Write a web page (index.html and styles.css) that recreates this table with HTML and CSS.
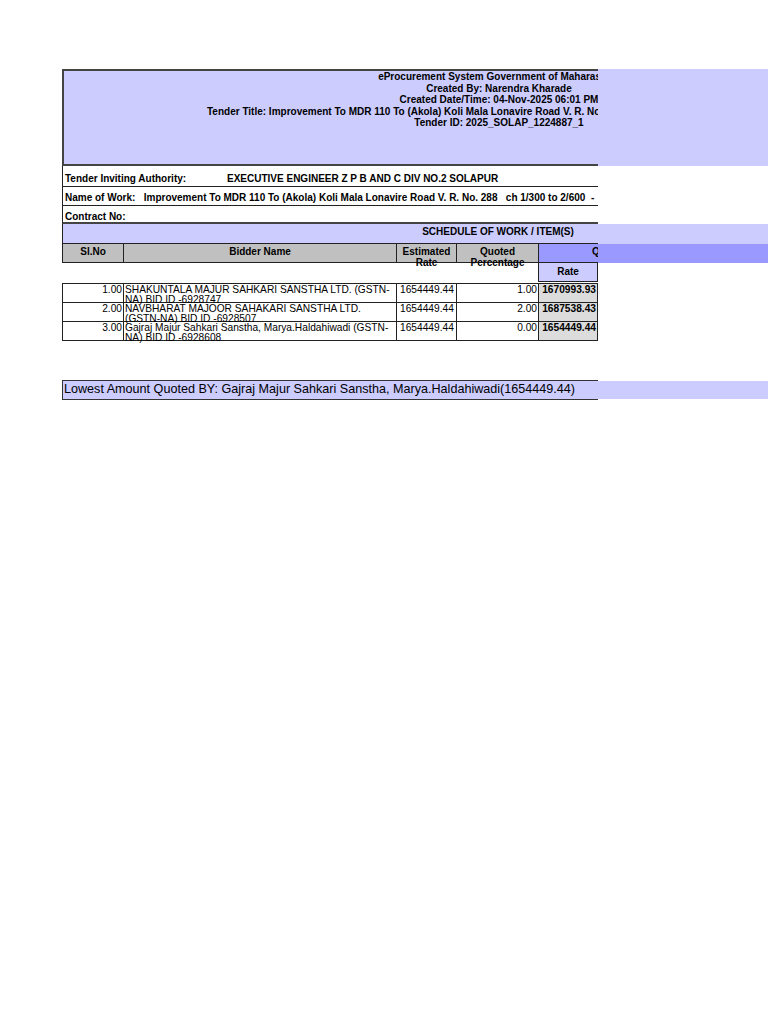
FILE: index.html
```html
<!DOCTYPE html>
<html>
<head>
<meta charset="utf-8">
<link rel="stylesheet" href="styles.css">
</head>
<body>
<div class="sheet">
  <div class="row hdr-row">
    <div class="main hdr">
      <div class="hdr-text">
        <div class="hl">eProcurement System Government of Maharashtra</div>
        <div class="hl">Created By: Narendra Kharade</div>
        <div class="hl">Created Date/Time: 04-Nov-2025 06:01 PM</div>
        <div class="hl title">Tender Title: Improvement To MDR 110 To (Akola) Koli Mala Lonavire Road V. R. No. 288 ch 1/300 to 2/600 - Tal. Mohol Dist. Solapur</div>
        <div class="hl">Tender ID: 2025_SOLAP_1224887_1</div>
      </div>
    </div>
    <div class="ext purple"></div>
  </div>

  <div class="row info-row first">
    <div class="main info"><span class="lbl">Tender Inviting Authority:</span><span class="tia">EXECUTIVE ENGINEER Z P B AND C DIV NO.2 SOLAPUR</span></div>
    <div class="ext"></div>
  </div>
  <div class="row info-row mid">
    <div class="main info">Name of Work:   Improvement To MDR 110 To (Akola) Koli Mala Lonavire Road V. R. No. 288   ch 1/300 to 2/600  -  Tal. Mohol Dist. Solapur</div>
    <div class="ext"></div>
  </div>
  <div class="row info-row last">
    <div class="main info">Contract No:</div>
    <div class="ext"></div>
  </div>

  <div class="row sched-row">
    <div class="main sched"><div class="sched-text">SCHEDULE OF WORK / ITEM(S)</div></div>
    <div class="ext purple"></div>
  </div>

  <div class="row colhdr-row">
    <div class="main colhdr">
      <div class="c c1 gray">Sl.No</div>
      <div class="c c2 gray">Bidder Name</div>
      <div class="c c3 gray">Estimated<br>Rate</div>
      <div class="c c4 gray">Quoted<br>Percentage</div>
      <div class="c c5 dpurple"><span class="qtext">Quoted Rate</span></div>
    </div>
    <div class="ext dpurple"></div>
  </div>

  <div class="row sub-row">
    <div class="main sub">
      <div class="c c1 blank"></div>
      <div class="c c2 blank"></div>
      <div class="c c3 blank"></div>
      <div class="c c4 blank"></div>
      <div class="c c5 purple ratehdr">Rate</div>
    </div>
    <div class="ext"></div>
  </div>

  <div class="data">
    <div class="drow">
      <div class="c c1 num">1.00</div>
      <div class="c c2 name">SHAKUNTALA MAJUR SAHKARI SANSTHA LTD. (GSTN-NA) BID ID -6928747</div>
      <div class="c c3 est">1654449.44</div>
      <div class="c c4 num">1.00</div>
      <div class="c c5 rate">1670993.93</div>
    </div>
    <div class="drow">
      <div class="c c1 num">2.00</div>
      <div class="c c2 name">NAVBHARAT MAJOOR SAHAKARI SANSTHA LTD. (GSTN-NA) BID ID -6928507</div>
      <div class="c c3 est">1654449.44</div>
      <div class="c c4 num">2.00</div>
      <div class="c c5 rate">1687538.43</div>
    </div>
    <div class="drow">
      <div class="c c1 num">3.00</div>
      <div class="c c2 name">Gajraj Majur Sahkari Sanstha, Marya.Haldahiwadi (GSTN-NA) BID ID -6928608</div>
      <div class="c c3 est">1654449.44</div>
      <div class="c c4 num">0.00</div>
      <div class="c c5 rate">1654449.44</div>
    </div>
  </div>

  <div class="row lowest-row">
    <div class="main lowest">Lowest Amount Quoted BY: Gajraj Majur Sahkari Sanstha, Marya.Haldahiwadi(1654449.44)</div>
    <div class="ext purple"></div>
  </div>
</div>
</body>
</html>
```

FILE: styles.css
```css
html, body {
  margin: 0;
  padding: 0;
  background: #ffffff;
}
body {
  font-family: "Liberation Sans", Arial, sans-serif;
  color: #000;
}
* { box-sizing: border-box; }

.sheet {
  margin: 69px 0 0 62px;
  width: 706px;
}
.row {
  display: flex;
}
.main {
  width: 536px;
  flex: none;
  overflow: hidden;
  white-space: nowrap;
}
.ext {
  flex: 1;
}
.purple { background: #ccccff; }
.dpurple { background: #9999ff; }
.gray { background: #c0c0c0; }

/* header */
.hdr-row { height: 97px; }
.hdr {
  background: #ccccff;
  border-top: 2px solid #444;
  border-left: 2px solid #444;
  border-bottom: 2px solid #444;
  padding-top: 0;
}
.hdr-text {
  width: 870px;
  text-align: center;
  font-weight: bold;
  font-size: 10px;
  line-height: 11.6px;
}
.hl.title {
  text-align: left;
  padding-left: 143px;
}

/* info rows */
.info-row.first { height: 21px; }
.info-row { height: 19px; }
.info-row.last { height: 18px; }
.info {
  border-left: 1px solid #222;
  border-bottom: 1px solid #222;
  font-weight: bold;
  font-size: 10px;
  white-space: pre;
  padding-left: 2px;
  display: flex;
  align-items: center;
}
.info-row.first .info { padding-top: 4px; }
.info-row.mid .info { padding-top: 3px; }
.info-row.last .info { border-bottom: 2px solid #444; padding-top: 4px; }
.lbl { width: 162px; }

/* schedule */
.sched-row { height: 20px; }
.sched {
  background: #ccccff;
  border-left: 1px solid #222;
  border-bottom: 1px solid #222;
}
.sched-text {
  width: 870px;
  text-align: center;
  font-weight: bold;
  font-size: 10px;
  line-height: 15px;
}

/* column header */
.colhdr-row { height: 19px; }
.colhdr {
  display: flex;
  border-bottom: 1px solid #222;
  overflow: visible;
  position: relative;
}
.c {
  flex: none;
  font-size: 10px;
  height: 100%;
}
.c1 { width: 61px; }
.c2 { width: 273px; }
.c3 { width: 60px; }
.c4 { width: 82px; }
.c5 { width: 60px; }
.colhdr .c {
  border-left: 1px solid #222;
  font-weight: bold;
  text-align: center;
  line-height: 11px;
  padding-top: 2px;
  white-space: nowrap;
}
.colhdr .c5 {
  overflow: hidden;
  text-align: left;
  padding-left: 53px;
}
.qtext { white-space: nowrap; }

/* sub header */
.sub-row { height: 19px; }
.sub { display: flex; }
.ratehdr {
  border-left: 1px solid #222;
  border-right: 1px solid #222;
  border-bottom: 1px solid #222;
  font-weight: bold;
  text-align: center;
  line-height: 17px;
}

/* data */
.data {
  margin-top: 1px;
  width: 536px;
  border-top: 1px solid #222;
}
.drow {
  display: flex;
  height: 19px;
  border-bottom: 1px solid #222;
}
.drow .c {
  border-left: 1px solid #222;
  line-height: 10px;
  padding-top: 1px;
  font-size: 10.2px;
}
.drow .num {
  text-align: right;
  padding-right: 1px;
}
.drow .name {
  white-space: normal;
  padding-left: 1px;
  padding-right: 6px;
}
.drow .est {
  padding-left: 3px;
}
.drow .rate {
  background: #dcdcdc;
  font-weight: bold;
  text-align: right;
  padding-right: 1px;
  border-right: 1px solid #222;
}

/* lowest */
.lowest-row {
  height: 20px;
  margin-top: 39px;
}
.lowest {
  background: #ccccff;
  border-top: 1px solid #333;
  border-bottom: 1px solid #333;
  border-left: 1px solid #333;
  font-size: 12.6px;
  line-height: 17px;
  padding-left: 1px;
}
.lowest-row .ext { margin: 1px 0; }
```
